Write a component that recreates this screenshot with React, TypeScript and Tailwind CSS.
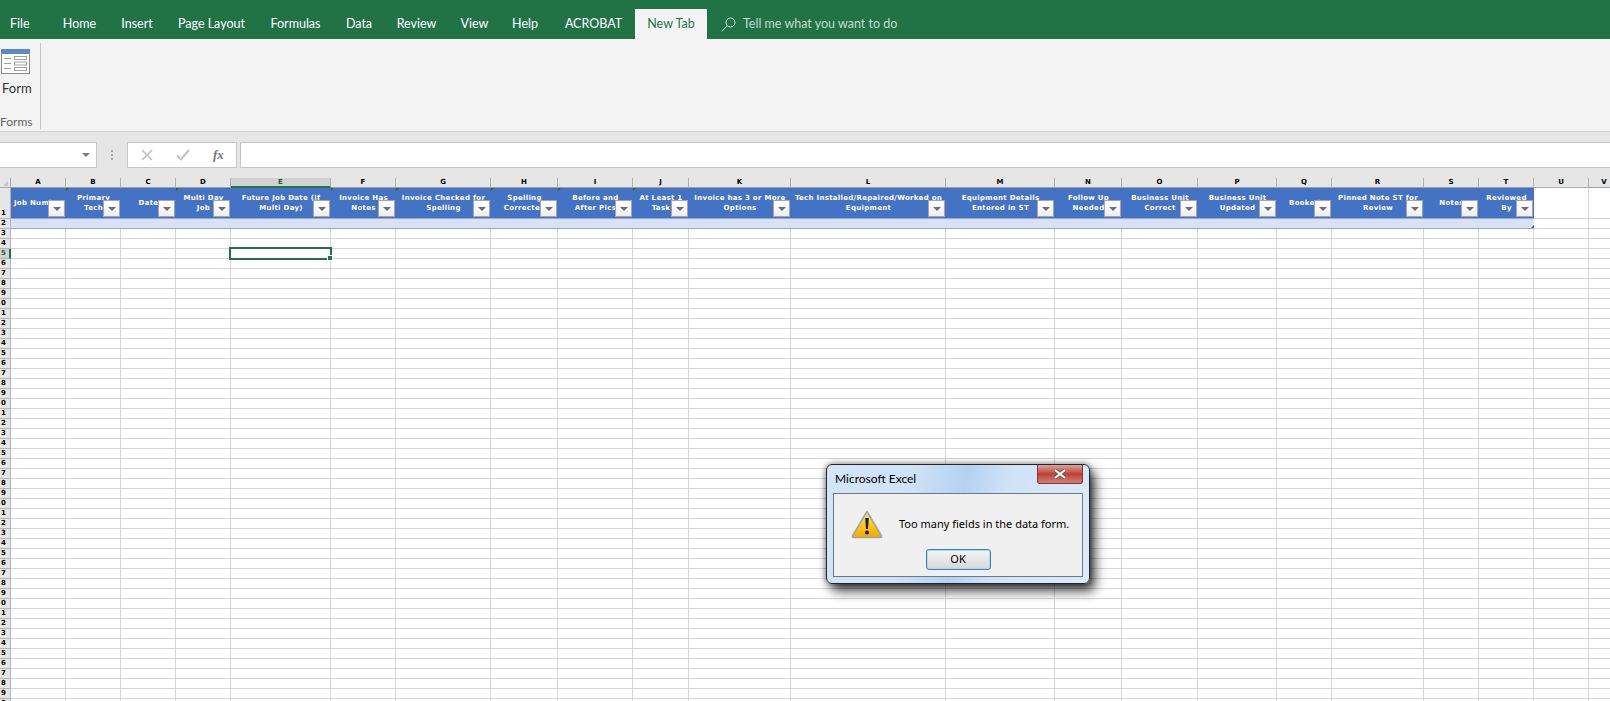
const tabs = [
  { label: 'File', cls: 'w-[53px] pl-[10px]' },
  { label: 'Home', cls: 'w-[53px] justify-center' },
  { label: 'Insert', cls: 'w-[62px] justify-center' },
  { label: 'Page Layout', cls: 'w-[87px] justify-center' },
  { label: 'Formulas', cls: 'w-[81px] justify-center' },
  { label: 'Data', cls: 'w-[46px] justify-center' },
  { label: 'Review', cls: 'w-[69px] justify-center' },
  { label: 'View', cls: 'w-[47px] justify-center' },
  { label: 'Help', cls: 'w-[54px] justify-center' },
  { label: 'ACROBAT', cls: 'w-[83px] justify-center' },
];

const columns = [
  { name: 'A', lines: ['Job Number'] },
  { name: 'B', lines: ['Primary', 'Tech'], flag: true },
  { name: 'C', lines: ['Date'] },
  { name: 'D', lines: ['Multi Day', 'Job'], flag: true },
  { name: 'E', lines: ['Future Job Date (if', 'Multi Day)'] },
  { name: 'F', lines: ['Invoice Has', 'Notes'], flag: true },
  { name: 'G', lines: ['Invoice Checked for', 'Spelling'], flag: true },
  { name: 'H', lines: ['Spelling', 'Corrected'], flag: true },
  { name: 'I', lines: ['Before and', 'After Pics'], flag: true },
  { name: 'J', lines: ['At Least 1', 'Task'], flag: true },
  { name: 'K', lines: ['Invoice has 3 or More', 'Options'] },
  { name: 'L', lines: ['Tech Installed/Repaired/Worked on', 'Equipment'] },
  { name: 'M', lines: ['Equipment Details', 'Entered in ST'] },
  { name: 'N', lines: ['Follow Up', 'Needed'] },
  { name: 'O', lines: ['Business Unit', 'Correct'] },
  { name: 'P', lines: ['Business Unit', 'Updated'] },
  { name: 'Q', lines: ['Booked'] },
  { name: 'R', lines: ['Pinned Note ST for', 'Review'] },
  { name: 'S', lines: ['Notes'] },
  { name: 'T', lines: ['Reviewed', 'By'] },
];

const blankRows = Array.from({ length: 48 }, (_, i) => i + 3);
const sheetFont = "font-['DejaVu_Sans'] font-bold text-[7px]";

const FilterButton = () => (
  <span className="absolute right-px bottom-px w-[17px] h-[17px] border border-[#a6a6a6] bg-gradient-to-b from-white to-[#eeeeee] flex items-center justify-center">
    <span className="w-0 h-0 border-x-[4px] border-x-transparent border-t-[4px] border-t-[#6e6e6e]" />
  </span>
);

const WarningIcon = () => (
  <svg width="32" height="29" viewBox="0 0 32 29">
    <defs>
      <linearGradient id="warn" x1="0" y1="0" x2="0" y2="1">
        <stop offset="0" stopColor="#fdeb8a" />
        <stop offset="0.55" stopColor="#fcc80e" />
        <stop offset="1" stopColor="#f4a900" />
      </linearGradient>
    </defs>
    <path d="M16 1.5 L30.5 26 Q31 27.5 29.5 27.5 L2.5 27.5 Q1 27.5 1.5 26 Z" fill="url(#warn)" stroke="#a3a3a3" strokeWidth="1.6" strokeLinejoin="round" />
    <path d="M14.2 8 L17.8 8 L17 19 L15 19 Z" fill="#1c1c1c" />
    <circle cx="16" cy="22.5" r="2" fill="#1c1c1c" />
  </svg>
);

export default function App() {
  return (
    <div className="relative w-[1610px] h-[701px] overflow-hidden bg-white font-['Lato',sans-serif]">
      {/* Tabs */}
      <div className="h-[39px] bg-[#217346] flex items-end text-[12.5px] text-white">
        {tabs.map((t) => (
          <div key={t.label} className={`h-[30px] flex items-center ${t.cls}`}>{t.label}</div>
        ))}
        <div className="w-[72px] h-[30px] bg-[#f3f3f3] text-[#217346] flex items-center justify-center">New Tab</div>
        <div className="h-[30px] flex items-center pl-[14px] gap-[7px] text-[#c5dccf]">
          <svg width="15" height="15" viewBox="0 0 15 15" fill="none" stroke="#d5e5dc" strokeWidth="1">
            <circle cx="9.5" cy="5.5" r="4.5" />
            <path d="M6.3 8.8 L0.8 14.3" />
          </svg>
          <span>Tell me what you want to do</span>
        </div>
      </div>

      {/* Ribbon */}
      <div className="h-[93px] bg-[#f3f3f3] border-b border-[#d4d4d4] flex pt-[4px]">
        <div className="w-[41px] h-[86px] border-r border-[#c6c6c6] overflow-hidden relative flex flex-col">
          <svg className="mt-[6px] ml-px shrink-0" width="29" height="25" viewBox="0 0 29 25">
            <rect x="0.5" y="0.5" width="28" height="24" fill="#fff" stroke="#8a8a8a" />
            <rect x="0" y="0" width="29" height="5" fill="#5b8ac4" />
            <path d="M3 9.5 H10 M3 14.5 H10 M3 19.5 H10" stroke="#a0a0a0" />
            <rect x="13.5" y="7.5" width="12" height="3" fill="#fff" stroke="#a0a0a0" />
            <rect x="13.5" y="13" width="12" height="3" fill="#fff" stroke="#a0a0a0" />
            <rect x="13.5" y="18.5" width="12" height="3" fill="#fff" stroke="#a0a0a0" />
          </svg>
          <span className="mt-[5px] ml-[2px] text-[13px] leading-[18px] text-[#333]">Form</span>
          <span className="mt-auto text-[12px] leading-[15px] text-[#666]">Forms</span>
        </div>
      </div>

      {/* Formula bar */}
      <div className="h-[46px] bg-[#e6e6e6] flex items-start pt-[10px]">
        <div className="w-[97px] h-[26px] bg-white border border-l-0 border-[#c6c6c6] flex items-center justify-end pr-[6px]">
          <span className="w-0 h-0 border-x-[4px] border-x-transparent border-t-[4px] border-t-[#7a7a7a]" />
        </div>
        <div className="w-[30px] h-[26px] flex flex-col items-center justify-center gap-[2px]">
          <span className="w-[2px] h-[2px] bg-[#a8a8a8]" />
          <span className="w-[2px] h-[2px] bg-[#a8a8a8]" />
          <span className="w-[2px] h-[2px] bg-[#a8a8a8]" />
        </div>
        <div className="w-[110px] h-[26px] bg-white border border-[#c6c6c6] flex items-center">
          <svg className="ml-[13px]" width="12" height="12" viewBox="0 0 12 12" stroke="#bdbdbd" strokeWidth="1.6" fill="none">
            <path d="M1 1 L11 11 M11 1 L1 11" />
          </svg>
          <svg className="ml-[23px]" width="14" height="12" viewBox="0 0 14 12" stroke="#c4c4c4" strokeWidth="2" fill="none">
            <path d="M1 6.5 L5 10.5 L13 1" />
          </svg>
          <span className="ml-[23px] font-['Liberation_Serif'] italic font-bold text-[13px] text-[#777]">fx</span>
        </div>
        <div className="ml-[3px] flex-1 h-[26px] bg-white border border-r-0 border-[#c6c6c6]" />
      </div>

      {/* Sheet */}
      <div className="grid grid-cols-[11px_55px_55px_55px_55px_100px_65px_95px_67px_75px_56px_102px_155px_109px_67px_76px_79px_55px_92px_55px_55px_55px_30px] text-black">
        <div className="h-[10px] bg-[#e6e6e6] border-r border-b border-[#ababab] flex items-end justify-end pr-[2px] pb-[1px]">
          <span className="w-0 h-0 border-l-[5px] border-l-transparent border-b-[5px] border-b-[#c2c2c2]" />
        </div>
        {columns.map((c) => (
          <div
            key={c.name}
            className={`h-[10px] flex items-center justify-center leading-none border-r border-[#b0b0b0] ${sheetFont} ${
              c.name === 'E' ? 'bg-[#d2d2d2] border-b-2 border-b-[#217346] text-[#1f5c3a]' : 'bg-[#e6e6e6] border-b border-b-[#9f9f9f]'
            }`}
          >
            {c.name}
          </div>
        ))}
        <div className={`h-[10px] bg-[#e6e6e6] border-r border-b border-[#b0b0b0] flex items-center justify-center leading-none ${sheetFont}`}>U</div>
        <div className={`h-[10px] bg-[#e6e6e6] border-b border-[#9f9f9f] flex items-center justify-center leading-none ${sheetFont}`}>V</div>

        {/* Row 1: table header */}
        <div className={`h-[31px] bg-[#e6e6e6] border-r border-b border-[#b4b4b4] flex items-end leading-none pb-px pl-px ${sheetFont}`}>1</div>
        {columns.map((c) => (
          <div key={c.name} className={`relative h-[31px] bg-[#4472c4] border-b border-[#8ea9db] flex flex-col items-center justify-center overflow-hidden whitespace-nowrap text-white leading-[10px] tracking-[0.3px] ${sheetFont}`}>
            {c.lines.map((line) => (
              <span key={line}>{line}</span>
            ))}
            {c.flag && <span className="absolute left-0 top-0 w-0 h-0 border-r-[3px] border-r-transparent border-t-[3px] border-t-[#107c10]" />}
            <FilterButton />
          </div>
        ))}
        <div className="h-[31px] border-r border-b border-[#d4d4d4]" />
        <div className="h-[31px] border-b border-[#d4d4d4]" />

        {/* Row 2: empty table row */}
        <div className={`h-[10px] bg-[#e6e6e6] border-r border-b border-[#b4b4b4] flex items-center leading-none pl-px ${sheetFont}`}>2</div>
        {columns.map((c) => (
          <div key={c.name} className="relative h-[10px] bg-[#d9e1f2] border-b border-[#8ea9db]">
            {c.name === 'T' && <span className="absolute right-0 bottom-0 w-0 h-0 border-l-[3px] border-l-transparent border-b-[3px] border-b-[#3f5f9f]" />}
          </div>
        ))}
        <div className="h-[10px] border-l border-l-[#8ea9db] border-r border-r-[#d4d4d4] border-b border-b-[#d4d4d4] -ml-px" />
        <div className="h-[10px] border-b border-[#d4d4d4]" />

        {/* Blank rows */}
        {blankRows.map((row) => (
          <div key={row} className="contents">
            <div
              className={`h-[10px] border-b border-[#b4b4b4] flex items-center leading-none pl-px ${sheetFont} ${
                row === 5 ? 'bg-[#d2d2d2] border-r-2 border-r-[#217346] text-[#1f5c3a]' : 'bg-[#e6e6e6] border-r'
              }`}
            >
              {row % 10}
            </div>
            {columns.map((c) => (
              <div key={c.name} className="relative h-[10px] border-r border-b border-[#d4d4d4]">
                {row === 5 && c.name === 'E' && (
                  <div className="absolute -left-[2px] -top-[2px] -right-[2px] -bottom-[2px] border-2 border-[#217346] z-10">
                    <span className="absolute -right-[3px] -bottom-[3px] w-[6px] h-[6px] bg-[#217346] border border-white" />
                  </div>
                )}
              </div>
            ))}
            <div className="h-[10px] border-r border-b border-[#d4d4d4]" />
            <div className="h-[10px] border-b border-[#d4d4d4]" />
          </div>
        ))}
      </div>

      {/* Alert dialog */}
      <div className="absolute left-[826px] top-[464px] w-[264px] h-[120px] rounded-[6px] border border-[#22262c] shadow-[5px_7px_12px_rgba(0,0,0,0.75),0_0_6px_rgba(0,0,0,0.5)] bg-[linear-gradient(100deg,#d3e5f7_0%,#cfe3f7_30%,#b4d2ef_50%,#cfe3f7_65%,#dcebf9_100%)] px-[6px] pb-[6px] flex flex-col">
        <div className="h-[28px] flex items-center justify-between shrink-0">
          <span className="text-[12px] text-black pl-[2px]">Microsoft Excel</span>
          <div className="self-start w-[46px] h-[19px] rounded-b-[3px] border border-t-0 border-[#7c3a34] bg-gradient-to-b from-[#dba29c] via-[#bf3f34] to-[#cf7f76] flex items-center justify-center">
            <svg width="14" height="10" viewBox="0 0 14 10">
              <path d="M2 1 L12 9 M12 1 L2 9" stroke="#5b5b5b" strokeWidth="3.6" />
              <path d="M2 1 L12 9 M12 1 L2 9" stroke="#f4f4f4" strokeWidth="2.2" />
            </svg>
          </div>
        </div>
        <div className="flex-1 bg-[#f0f0f0] border border-[#6b7a88] flex flex-col">
          <div className="flex items-center pl-[17px] pt-[16px]">
            <WarningIcon />
            <span className="ml-[16px] text-[11px] text-black font-['Noto_Sans'] whitespace-nowrap">Too many fields in the data form.</span>
          </div>
          <div className="flex justify-center mt-[10px]">
            <button className="w-[65px] h-[21px] rounded-[3px] border border-[#3c7fb1] bg-gradient-to-b from-[#f3f3f3] via-[#e8e8e8] to-[#d6d6d6] text-[11px] text-black font-['Noto_Sans'] shadow-[inset_0_0_0_1px_rgba(150,220,250,0.8)]">
              OK
            </button>
          </div>
        </div>
      </div>
    </div>
  );
}
